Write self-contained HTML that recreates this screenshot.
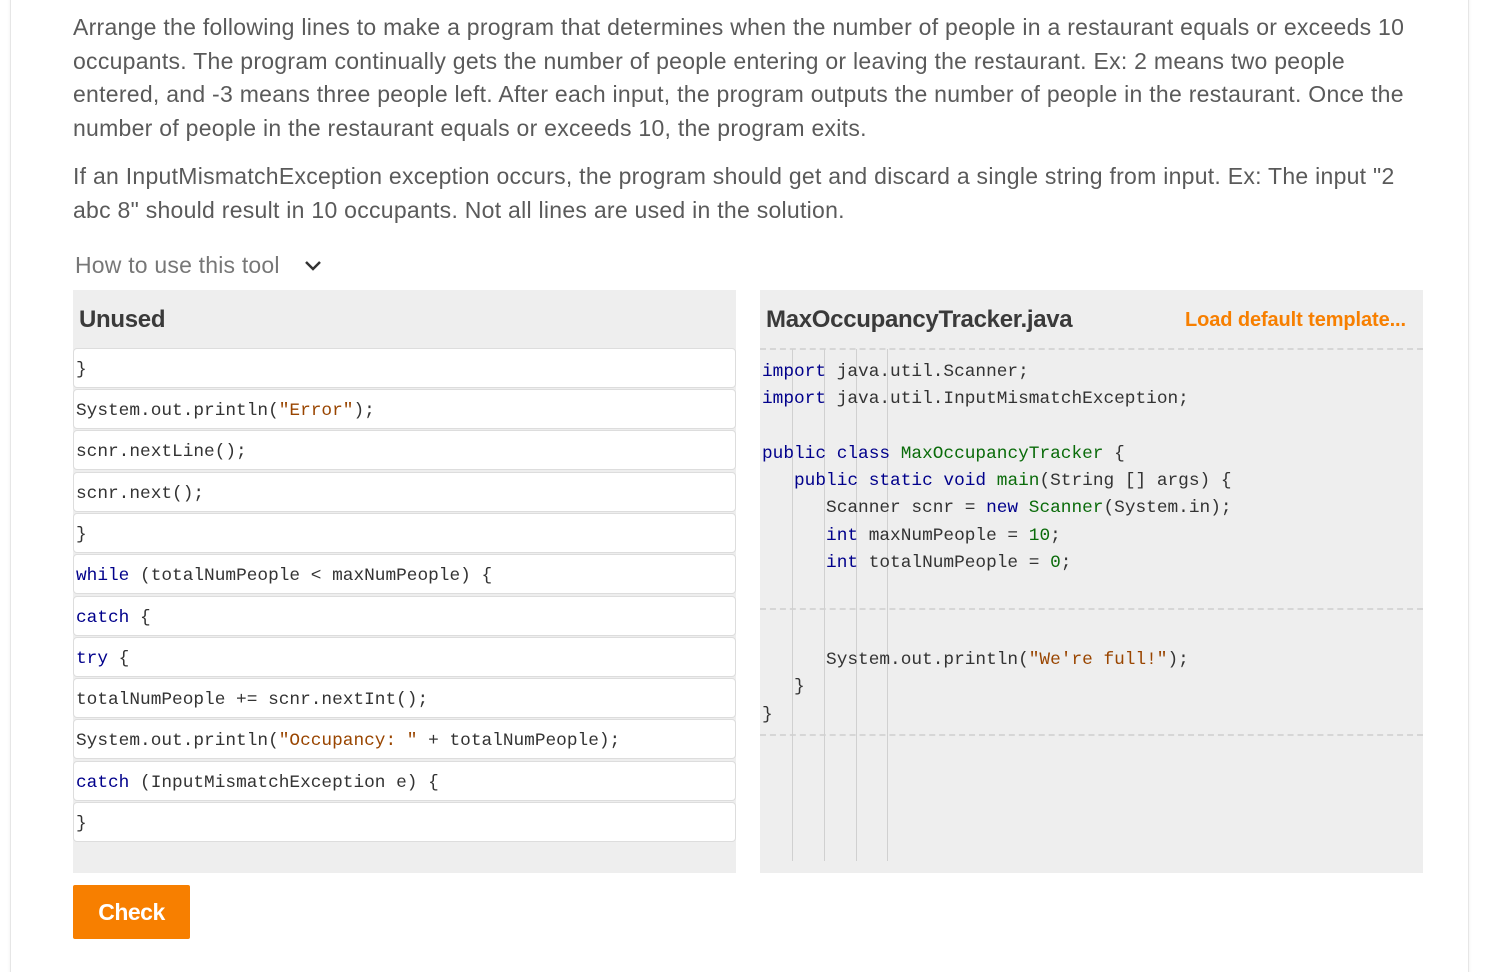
<!DOCTYPE html>
<html style="overflow:hidden;height:972px"><head><style>
*{margin:0;padding:0;box-sizing:border-box}
body{width:1486px;height:972px;background:#fff;font-family:"Liberation Sans",sans-serif;position:relative;overflow:hidden}
.frame{position:absolute;left:10px;top:-5px;width:1459px;height:985px;border:1px solid #e6e6e6;box-shadow:0 0 3px #eee}
p{position:absolute;left:73px;width:1400px;font-size:23px;line-height:33.5px;color:#5a5a5a;letter-spacing:0.27px;white-space:nowrap}
.how{position:absolute;left:75px;top:252px;font-size:23px;color:#777;letter-spacing:0.2px}
.chev{position:absolute;left:304px;top:259px}
.panel{position:absolute;top:290px;width:663px;height:583px;background:#eee}
.h{position:absolute;top:306px;font-size:24px;font-weight:bold;color:#3a3a3a;letter-spacing:-0.3px}
.blk{position:absolute;left:73px;width:663px;height:40px;background:#fff;border:1px solid #ddd;border-radius:4px;font-family:"Liberation Mono",monospace;font-size:17.8px;color:#333;line-height:42px;padding-left:2px;white-space:pre}
.k{color:#00008b}.s{color:#994500}.c{color:#0a6b0a}
.code{position:absolute;left:762px;font-family:"Liberation Mono",monospace;font-size:17.8px;color:#333;white-space:pre;line-height:27.3px}
.dash{position:absolute;left:760px;width:663px;border-top:2px dashed #d6d6d6}
.guide{position:absolute;top:349px;height:512px;border-left:1px solid #d0d0d0}
.btn{position:absolute;left:73px;top:885px;width:117px;height:54px;background:#f77f00;border-radius:2px;color:#fff;font-weight:bold;font-size:23px;text-align:center;line-height:54px;letter-spacing:-0.5px}
</style></head><body>
<div class="frame"></div>
<p style="top:11px">Arrange the following lines to make a program that determines when the number of people in a restaurant equals or exceeds 10<br>occupants. The program continually gets the number of people entering or leaving the restaurant. Ex: 2 means two people<br>entered, and -3 means three people left. After each input, the program outputs the number of people in the restaurant. Once the<br>number of people in the restaurant equals or exceeds 10, the program exits.</p>
<p style="top:160px">If an InputMismatchException exception occurs, the program should get and discard a single string from input. Ex: The input "2<br>abc 8" should result in 10 occupants. Not all lines are used in the solution.</p>
<div class="how">How to use this tool</div>
<svg class="chev" width="18" height="14" viewBox="0 0 18 14"><path d="M2 3 L9 10 L16 3" fill="none" stroke="#333" stroke-width="2.5"/></svg>
<div class="panel" style="left:73px"></div>
<div class="panel" style="left:760px"></div>
<div class="h" style="left:79px">Unused</div>
<div class="h" style="left:766px">MaxOccupancyTracker.java</div>
<div class="h" style="left:1185px;color:#f77f00;font-size:20px;top:309px;letter-spacing:-0.1px">Load default template...</div>
<div class="blk" style="top:348px">}</div>
<div class="blk" style="top:389px">System.out.println(<span class="s">"Error"</span>);</div>
<div class="blk" style="top:430px">scnr.nextLine();</div>
<div class="blk" style="top:472px">scnr.next();</div>
<div class="blk" style="top:513px">}</div>
<div class="blk" style="top:554px"><span class="k">while</span> (totalNumPeople &lt; maxNumPeople) {</div>
<div class="blk" style="top:596px"><span class="k">catch</span> {</div>
<div class="blk" style="top:637px"><span class="k">try</span> {</div>
<div class="blk" style="top:678px">totalNumPeople += scnr.nextInt();</div>
<div class="blk" style="top:719px">System.out.println(<span class="s">"Occupancy: "</span> + totalNumPeople);</div>
<div class="blk" style="top:761px"><span class="k">catch</span> (InputMismatchException e) {</div>
<div class="blk" style="top:802px">}</div>
<div class="dash" style="top:348px"></div>
<div class="dash" style="top:608px"></div>
<div class="dash" style="top:734px"></div>
<div class="guide" style="left:792px"></div>
<div class="guide" style="left:824px"></div>
<div class="guide" style="left:856px"></div>
<div class="guide" style="left:887px"></div>
<div class="code" style="top:359px"><span class="k">import</span> java.util.Scanner;
<span class="k">import</span> java.util.InputMismatchException;

<span class="k">public</span> <span class="k">class</span> <span class="c">MaxOccupancyTracker</span> {
   <span class="k">public</span> <span class="k">static</span> <span class="k">void</span> <span class="c">main</span>(String [] args) {
      Scanner scnr = <span class="k">new</span> <span class="c">Scanner</span>(System.in);
      <span class="k">int</span> maxNumPeople = <span class="c">10</span>;
      <span class="k">int</span> totalNumPeople = <span class="c">0</span>;</div>
<div class="code" style="top:647px">      System.out.println(<span class="s">"We're full!"</span>);
   }
}</div>
<div class="btn">Check</div>
</body></html>
